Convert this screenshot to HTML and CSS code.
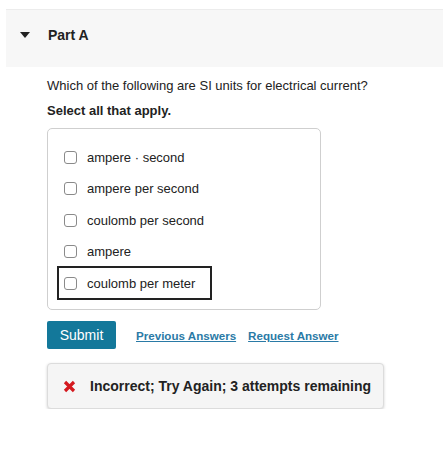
FILE: index.html
```html
<!DOCTYPE html>
<html>
<head>
<meta charset="utf-8">
<link rel="stylesheet" href="styles.css">
</head>
<body>
<div class="part-header">
  <span class="caret"></span>
  <span class="part-title">Part A</span>
</div>
<div class="content">
  <p class="question">Which of the following are SI units for electrical current?</p>
  <p class="instruction">Select all that apply.</p>
  <div class="options">
    <label class="option"><span class="box"></span><span>ampere &middot; second</span></label>
    <label class="option"><span class="box"></span><span>ampere per second</span></label>
    <label class="option"><span class="box"></span><span>coulomb per second</span></label>
    <label class="option"><span class="box"></span><span>ampere</span></label>
    <label class="option focused"><span class="box"></span><span>coulomb per meter</span></label>
  </div>
  <div class="actions">
    <button class="submit">Submit</button>
    <a class="link prev" href="#">Previous Answers</a>
    <a class="link" href="#">Request Answer</a>
  </div>
  <div class="feedback">
    <svg class="xicon" width="13" height="13" viewBox="0 0 13 13"><path d="M2 2 L11 11 M11 2 L2 11" stroke="#d4191f" stroke-width="3.2" stroke-linecap="butt"/></svg>
    <span class="feedback-text">Incorrect; Try Again; 3 attempts remaining</span>
  </div>
</div>
</body>
</html>
```
FILE: styles.css
```css
html, body {
  margin: 0;
  padding: 0;
  background: #fff;
  font-family: "Liberation Sans", Arial, sans-serif;
  color: #222;
}
.part-header {
  margin-top: 9px;
  margin-left: 6px;
  height: 58px;
  box-sizing: border-box;
  padding-top: 17px;
  border-top: 1px solid #ececec;
  background: #f7f7f7;
  display: flex;
  align-items: flex-start;
}
.caret {
  width: 0;
  height: 0;
  margin-left: 14px;
  margin-top: 5px;
  border-left: 5px solid transparent;
  border-right: 5px solid transparent;
  border-top: 6px solid #222;
}
.part-title {
  margin-left: 18px;
  font-weight: bold;
  font-size: 14px;
  line-height: 16px;
  color: #222;
}
.content {
  padding-left: 47px;
}
.question {
  margin: 11px 0 0;
  font-size: 13px;
  line-height: 16px;
  color: #222;
}
.instruction {
  margin: 9px 0 0;
  font-size: 13px;
  font-weight: bold;
  line-height: 16px;
}
.options {
  box-sizing: border-box;
  margin-top: 9px;
  width: 274px;
  border: 1px solid #cfcfcf;
  border-radius: 5px;
  padding: 13px 0 11px 11px;
  display: flex;
  flex-direction: column;
  align-items: flex-start;
  gap: 1.5px;
}
.option {
  height: 30px;
  display: inline-flex;
  align-items: center;
  padding: 0 15px 0 5px;
  font-size: 13px;
  color: #222;
}
.option.focused {
  outline: 2px solid #222;
}
.box {
  width: 11px;
  height: 11px;
  border: 1px solid #8a8a8a;
  border-radius: 3px;
  margin-right: 10px;
  background: #fff;
}
.actions {
  margin-top: 11px;
  display: flex;
  align-items: center;
}
.submit {
  width: 69px;
  height: 28px;
  border: none;
  border-radius: 2px;
  background: #13789a;
  color: #fff;
  font-family: "Liberation Sans", Arial, sans-serif;
  font-size: 14px;
  padding: 0;
}
.link {
  font-size: 11.6px;
  font-weight: bold;
  color: #2a7aa6;
  text-decoration: underline;
}
.prev {
  margin-left: 20px;
  margin-right: 12px;
}
.feedback {
  margin-top: 14px;
  width: 335px;
  height: 44px;
  border: 1px solid #dcdcdc;
  border-radius: 4px;
  background: #f5f5f5;
  box-shadow: 0 1px 3px rgba(0,0,0,0.18);
  display: flex;
  align-items: center;
}
.xicon {
  margin-left: 15px;
}
.feedback-text {
  margin-left: 14px;
  font-size: 14px;
  font-weight: bold;
  color: #222;
}
```
